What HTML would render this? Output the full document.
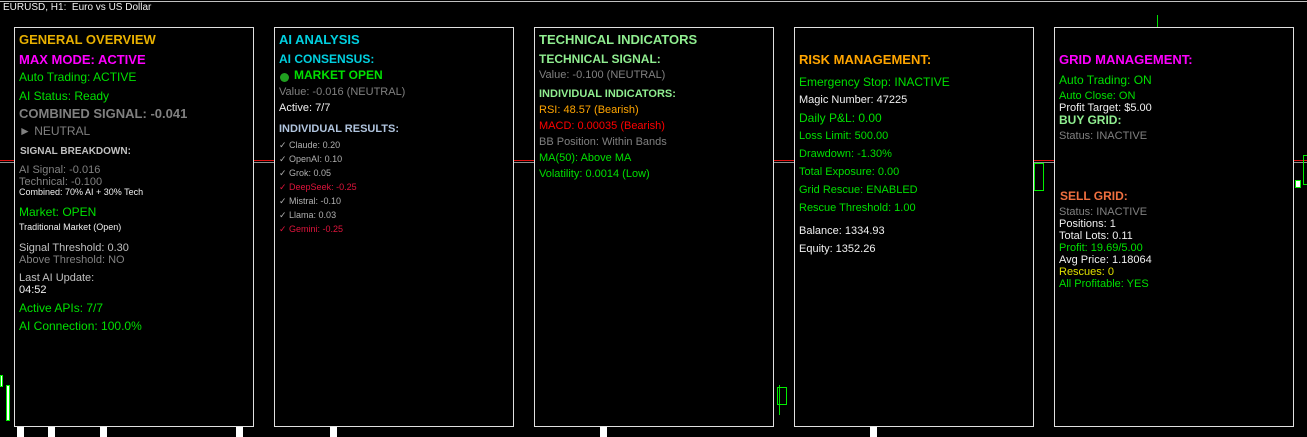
<!DOCTYPE html>
<html><head><meta charset="utf-8"><style>
*{margin:0;padding:0;box-sizing:border-box}
body{width:1307px;height:437px;background:#000;position:relative;overflow:hidden;font-family:"Liberation Sans",Arial,sans-serif}
.p{position:absolute;top:27px;width:240px;height:400px;border:1px solid #e0e0e0;background:#000}
.t{position:absolute;white-space:nowrap;line-height:14px;font-size:12px}
.b{font-weight:bold}
.g{color:#00e000}.gr{color:#808080}.w{color:#f0f0f0}.ls{color:#c0c0c0}
.ln{position:absolute;background:#00e000}
.cw{position:absolute;background:#fff}
</style></head><body>
<div style="position:absolute;left:0;top:1px;width:1307px;height:1px;background:#c0c0c0"></div>
<div class="t w" style="left:3px;top:2px;font-size:10px;line-height:12px">EURUSD, H1:&nbsp; Euro vs US Dollar</div>
<div style="position:absolute;left:0;top:160px;width:1307px;height:1px;background:#e01010"></div>
<div style="position:absolute;left:0;top:162px;width:1307px;height:1px;background:#909090"></div>
<!-- candles -->
<div class="cw" style="left:0;top:375px;width:3px;height:12px;border:1px solid #0e0"></div>
<div class="cw" style="left:6px;top:385px;width:4px;height:36px;border:1px solid #0e0"></div>
<div class="cw" style="left:17px;top:427px;width:7px;height:10px"></div>
<div class="cw" style="left:48px;top:427px;width:7px;height:10px"></div>
<div class="cw" style="left:100px;top:427px;width:7px;height:10px"></div>
<div class="cw" style="left:236px;top:427px;width:7px;height:10px"></div>
<div class="cw" style="left:330px;top:427px;width:7px;height:10px"></div>
<div class="cw" style="left:600px;top:427px;width:7px;height:10px"></div>
<div class="cw" style="left:870px;top:427px;width:7px;height:10px"></div>
<div class="ln" style="left:1157px;top:15px;width:1px;height:12px"></div>
<div class="ln" style="left:779px;top:385px;width:1px;height:30px"></div>
<div style="position:absolute;left:777px;top:387px;width:10px;height:18px;border:1px solid #0e0"></div>
<div style="position:absolute;left:1034px;top:163px;width:10px;height:28px;border:1px solid #0e0"></div>
<div style="position:absolute;left:1295px;top:180px;width:6px;height:8px;background:#fff;border:1px solid #0e0"></div>
<div class="ln" style="left:1293px;top:170px;width:1px;height:40px"></div>
<div style="position:absolute;left:1303px;top:155px;width:6px;height:30px;border:1px solid #0e0"></div>

<div class="p" style="left:14px"></div>
<div class="p" style="left:274px"></div>
<div class="p" style="left:534px"></div>
<div class="p" style="left:794px"></div>
<div class="p" style="left:1054px"></div>

<!-- P1 -->
<div class="t b" style="left:19px;top:33px;font-size:13px;color:#e8b000">GENERAL OVERVIEW</div>
<div class="t b" style="left:19px;top:53px;font-size:13px;color:#ff00ff">MAX MODE: ACTIVE</div>
<div class="t g" style="left:19px;top:70px">Auto Trading: ACTIVE</div>
<div class="t g" style="left:19px;top:89px">AI Status: Ready</div>
<div class="t b gr" style="left:19px;top:107px;font-size:13px">COMBINED SIGNAL: -0.041</div>
<div class="t gr" style="left:19px;top:124px;font-size:12px">► NEUTRAL</div>
<div class="t b ls" style="left:20px;top:145px;font-size:10px">SIGNAL BREAKDOWN:</div>
<div class="t gr" style="left:19px;top:164px;font-size:11px;line-height:12px">AI Signal: -0.016</div>
<div class="t gr" style="left:19px;top:176px;font-size:11px;line-height:12px">Technical: -0.100</div>
<div class="t w" style="left:19px;top:187px;font-size:9px;line-height:11px">Combined: 70% AI + 30% Tech</div>
<div class="t g" style="left:19px;top:205px">Market: OPEN</div>
<div class="t w" style="left:19px;top:222px;font-size:9px;line-height:11px">Traditional Market (Open)</div>
<div class="t ls" style="left:19px;top:242px;font-size:11px;line-height:12px">Signal Threshold: 0.30</div>
<div class="t gr" style="left:19px;top:254px;font-size:11px;line-height:12px">Above Threshold: NO</div>
<div class="t ls" style="left:19px;top:272px;font-size:11px;line-height:12px">Last AI Update:</div>
<div class="t w" style="left:19px;top:284px;font-size:11px;line-height:12px">04:52</div>
<div class="t g" style="left:19px;top:301px">Active APIs: 7/7</div>
<div class="t g" style="left:19px;top:319px">AI Connection: 100.0%</div>

<!-- P2 -->
<div class="t b" style="left:279px;top:33px;font-size:13px;color:#00d0e0">AI ANALYSIS</div>
<div class="t b" style="left:279px;top:52px;font-size:12px;color:#00d0e0">AI CONSENSUS:</div>
<div style="position:absolute;left:280px;top:73px;width:9px;height:9px;border-radius:50%;background:#20a020"></div>
<div class="t b g" style="left:294px;top:68px">MARKET OPEN</div>
<div class="t gr" style="left:279px;top:85px;font-size:11px">Value: -0.016 (NEUTRAL)</div>
<div class="t w" style="left:279px;top:101px;font-size:11px">Active: 7/7</div>
<div class="t b" style="left:279px;top:122px;font-size:11px;color:#b0c4de">INDIVIDUAL RESULTS:</div>
<div class="t" style="left:279px;top:138px;font-size:9px;color:#b0b0b0">✓ Claude: 0.20</div>
<div class="t" style="left:279px;top:152px;font-size:9px;color:#b0b0b0">✓ OpenAI: 0.10</div>
<div class="t" style="left:279px;top:166px;font-size:9px;color:#b0b0b0">✓ Grok: 0.05</div>
<div class="t" style="left:279px;top:180px;font-size:9px;color:#e0143c">✓ DeepSeek: -0.25</div>
<div class="t" style="left:279px;top:194px;font-size:9px;color:#b0b0b0">✓ Mistral: -0.10</div>
<div class="t" style="left:279px;top:208px;font-size:9px;color:#b0b0b0">✓ Llama: 0.03</div>
<div class="t" style="left:279px;top:222px;font-size:9px;color:#e0143c">✓ Gemini: -0.25</div>

<!-- P3 -->
<div class="t b" style="left:539px;top:33px;font-size:13px;color:#90ee90">TECHNICAL INDICATORS</div>
<div class="t b" style="left:539px;top:52px;font-size:12px;color:#90ee90">TECHNICAL SIGNAL:</div>
<div class="t gr" style="left:539px;top:68px;font-size:11px">Value: -0.100 (NEUTRAL)</div>
<div class="t b" style="left:539px;top:87px;font-size:11px;color:#90ee90">INDIVIDUAL INDICATORS:</div>
<div class="t" style="left:539px;top:103px;font-size:11px;color:#ffa500">RSI: 48.57 (Bearish)</div>
<div class="t" style="left:539px;top:119px;font-size:11px;color:#ff0000">MACD: 0.00035 (Bearish)</div>
<div class="t gr" style="left:539px;top:135px;font-size:11px">BB Position: Within Bands</div>
<div class="t g" style="left:539px;top:151px;font-size:11px">MA(50): Above MA</div>
<div class="t g" style="left:539px;top:167px;font-size:11px">Volatility: 0.0014 (Low)</div>

<!-- P4 -->
<div class="t b" style="left:799px;top:53px;font-size:13px;color:#ffa500">RISK MANAGEMENT:</div>
<div class="t g" style="left:799px;top:75px">Emergency Stop: INACTIVE</div>
<div class="t w" style="left:799px;top:93px;font-size:11px">Magic Number: 47225</div>
<div class="t g" style="left:799px;top:111px">Daily P&amp;L: 0.00</div>
<div class="t g" style="left:799px;top:129px;font-size:11px">Loss Limit: 500.00</div>
<div class="t g" style="left:799px;top:147px;font-size:11px">Drawdown: -1.30%</div>
<div class="t g" style="left:799px;top:165px;font-size:11px">Total Exposure: 0.00</div>
<div class="t g" style="left:799px;top:183px;font-size:11px">Grid Rescue: ENABLED</div>
<div class="t g" style="left:799px;top:201px;font-size:11px">Rescue Threshold: 1.00</div>
<div class="t w" style="left:799px;top:224px;font-size:11px">Balance: 1334.93</div>
<div class="t w" style="left:799px;top:242px;font-size:11px">Equity: 1352.26</div>

<!-- P5 -->
<div class="t b" style="left:1059px;top:53px;font-size:13px;color:#ff00ff">GRID MANAGEMENT:</div>
<div class="t g" style="left:1059px;top:73px">Auto Trading: ON</div>
<div class="t g" style="left:1059px;top:90px;font-size:11px;line-height:12px">Auto Close: ON</div>
<div class="t w" style="left:1059px;top:102px;font-size:11px;line-height:12px">Profit Target: $5.00</div>
<div class="t b" style="left:1059px;top:113px;font-size:12px;color:#90ee90">BUY GRID:</div>
<div class="t gr" style="left:1059px;top:130px;font-size:11px;line-height:12px">Status: INACTIVE</div>
<div class="t b" style="left:1060px;top:189px;font-size:12px;color:#f07040">SELL GRID:</div>
<div class="t gr" style="left:1059px;top:206px;font-size:11px;line-height:12px">Status: INACTIVE</div>
<div class="t w" style="left:1059px;top:218px;font-size:11px;line-height:12px">Positions: 1</div>
<div class="t w" style="left:1059px;top:230px;font-size:11px;line-height:12px">Total Lots: 0.11</div>
<div class="t g" style="left:1059px;top:242px;font-size:11px;line-height:12px">Profit: 19.69/5.00</div>
<div class="t w" style="left:1059px;top:254px;font-size:11px;line-height:12px">Avg Price: 1.18064</div>
<div class="t" style="left:1059px;top:266px;font-size:11px;line-height:12px;color:#e0e000">Rescues: 0</div>
<div class="t g" style="left:1059px;top:278px;font-size:11px;line-height:12px">All Profitable: YES</div>
</body></html>
